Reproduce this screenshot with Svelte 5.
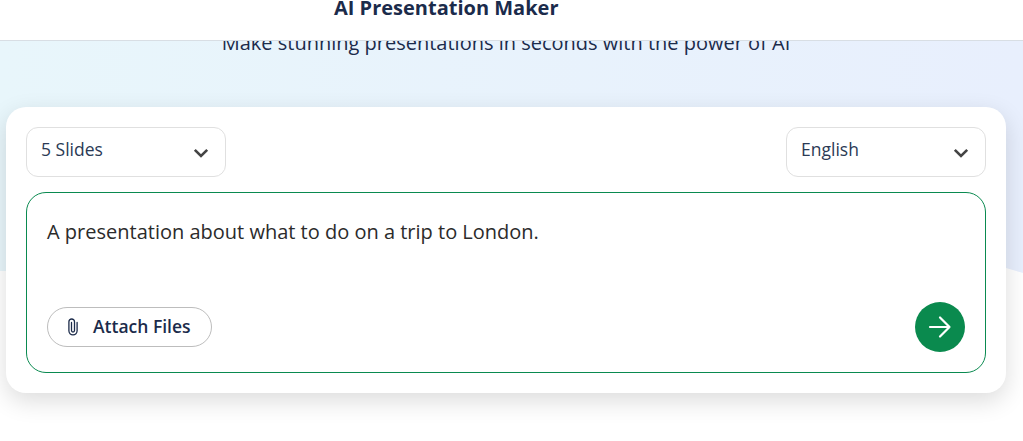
<script>
    const presets = [
        { label: '5 Slides' },
        { label: 'English' }
    ];
    let prompt = 'A presentation about what to do on a trip to London.';
</script>

<header class="topbar">
    <h1>AI Presentation Maker</h1>
</header>

<main class="hero">
    <p class="subtitle">Make stunning presentations in seconds with the power of AI</p>

    <section class="card">
        <div class="options">
            {#each presets as preset}
                <button class="select" type="button">
                    <span>{preset.label}</span>
                    <svg width="16" height="10" viewBox="0 0 16 10" fill="none" aria-hidden="true">
                        <path d="M1.8 1.800 8 8l6.200-6.200" stroke="#444" stroke-width="2.600" />
                    </svg>
                </button>
            {/each}
        </div>

        <div class="composer">
            <p class="prompt">{prompt}</p>
            <div class="actions">
                <button class="attach" type="button">
                    <svg width="12" height="18" viewBox="0 0 12 18" fill="none" aria-hidden="true">
                        <path d="M4.500 4.500v8a1.500 1.500 0 0 0 3 0V3.800a2.800 2.800 0 0 0-5.600 0v9a4.100 4.100 0 0 0 8.200 0V4.500" stroke="#1c2b4a" stroke-width="1.300" stroke-linecap="round" />
                    </svg>
                    <span>Attach Files</span>
                </button>
                <button class="send" type="button" aria-label="Send">
                    <svg width="24" height="24" viewBox="0 0 24 24" fill="none" aria-hidden="true">
                        <path d="M2 12h19.500M12 2.500 21.500 12 12 21.500" stroke="#fff" stroke-width="2.200" stroke-linecap="round" stroke-linejoin="round" />
                    </svg>
                </button>
            </div>
        </div>
    </section>
</main>

<style>
    :global(body) {
        margin: 0;
        height: 441px;
        overflow: hidden;
        background: #fff;
        font-family: "Open Sans", "Noto Sans", sans-serif;
    }

    .topbar {
        position: fixed;
        top: 0;
        left: 0;
        right: 0;
        z-index: 5;
        height: 40px;
        overflow: hidden;
        background: #fff;
        border-bottom: 1px solid #d8dee4;
    }

    h1 {
        margin: -6px 0 0 334px;
        font-size: 20px;
        line-height: 28px;
        font-weight: 700;
        color: #1b2b4b;
    }

    .hero {
        position: relative;
        height: 441px;
        padding: 29px 17px 0 6px;
        box-sizing: border-box;
        overflow: hidden;
        background: linear-gradient(90deg, #e8f6fb 0%, #e8effd 100%);
    }

    /* white sweep at the bottom of the hero */
    .hero::after {
        content: '';
        position: absolute;
        left: 0;
        right: 0;
        bottom: 0;
        height: 173px;
        clip-path: polygon(0 3px, 1006px 0, 1023px 5px, 1023px 100%, 0 100%);
        background: #fff;
    }

    .subtitle {
        position: relative;
        margin: 0 0 50px;
        text-align: center;
        font-size: 20px;
        line-height: 28px;
        color: #1b2b4b;
    }

    .card {
        position: relative;
        z-index: 1;
        height: 286px;
        padding: 20px;
        box-sizing: border-box;
        background: #fff;
        border-radius: 20px;
        box-shadow: 0 8px 24px rgba(0, 0, 0, 0.14);
    }

    .options {
        display: flex;
        justify-content: space-between;
        margin-bottom: 15px;
    }

    .select {
        display: flex;
        align-items: center;
        justify-content: space-between;
        width: 200px;
        height: 50px;
        padding: 0 16px 0 14px;
        background: #fff;
        border: 1px solid #e0e0e0;
        border-radius: 12px;
        font: 400 17.500px "Open Sans", sans-serif;
        color: #2b3a55;
    }

    .select span {
        margin-top: -7px;
    }

    .select svg {
        margin-top: 2px;
    }

    .composer {
        display: flex;
        flex-direction: column;
        justify-content: space-between;
        height: 181px;
        padding: 25px 20px 20px;
        box-sizing: border-box;
        border: 1px solid #0a8a50;
        border-radius: 20px;
    }

    .prompt {
        margin: 0;
        font-size: 20px;
        line-height: 28px;
        color: #2b2b2b;
    }

    .actions {
        display: flex;
        align-items: center;
        justify-content: space-between;
    }

    .attach {
        display: flex;
        align-items: center;
        gap: 14px;
        height: 40px;
        width: 165px;
        padding: 0 0 0 19px;
        background: #fff;
        border: 1px solid #bdbdbd;
        border-radius: 20px;
        font: 600 17.500px "Open Sans", sans-serif;
        color: #1b2b4b;
    }

    .attach span {
        margin-top: -2px;
    }

    .send {
        display: flex;
        align-items: center;
        justify-content: center;
        width: 50px;
        height: 50px;
        padding: 0;
        border: none;
        border-radius: 50%;
        background: #0a8a4e;
    }
</style>
